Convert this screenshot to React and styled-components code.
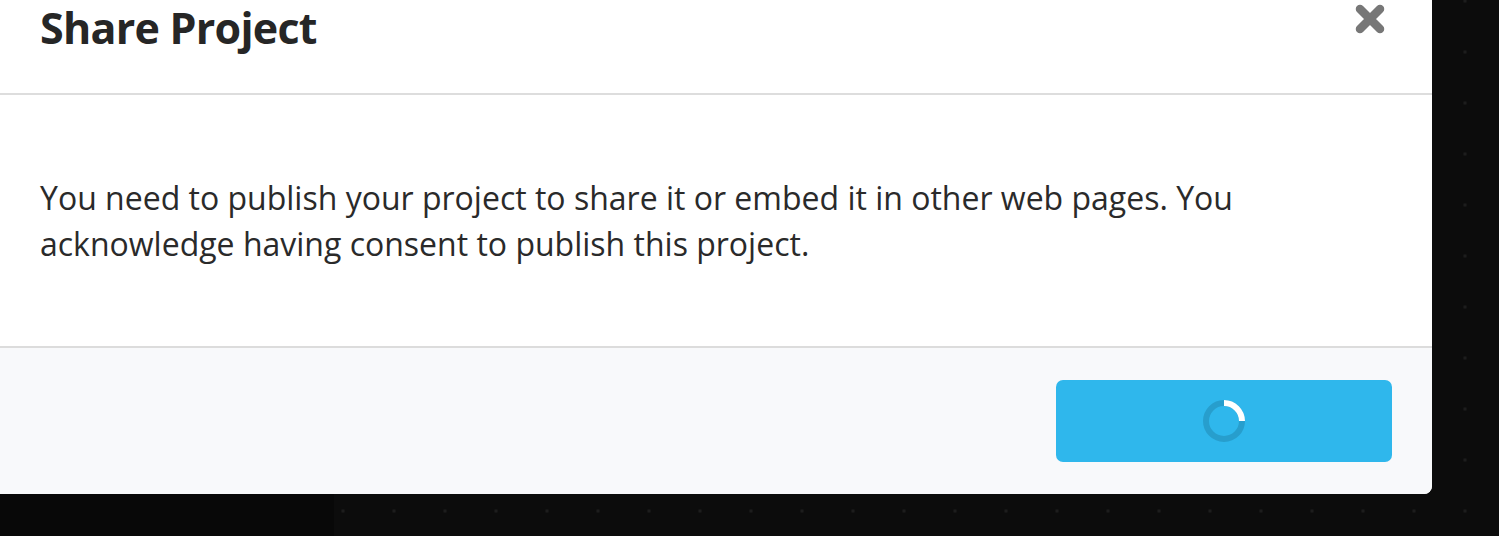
import React from 'react';
import styled, { createGlobalStyle } from 'styled-components';

const GlobalStyle = createGlobalStyle`
  html, body {
    margin: 0;
    padding: 0;
    background: #080808;
    overflow: hidden;
  }
  * {
    box-sizing: border-box;
  }
`;

const Screen = styled.div`
  position: relative;
  display: flex;
  width: 1499px;
  height: 536px;
  overflow: hidden;
  font-family: 'Open Sans', 'Noto Sans', sans-serif;
`;

const Sidebar = styled.div`
  width: 334px;
  flex-shrink: 0;
  background: #080808;
`;

const Canvas = styled.div`
  flex: 1;
  background-color: #0c0c0c;
  background-image: radial-gradient(circle, #1d1d1d 1.6px, transparent 2px);
  background-size: 51px 51px;
  background-position: -16.5px -24.5px;
`;

const Modal = styled.div`
  position: absolute;
  left: -20px;
  top: -20px;
  width: 1452px;
  display: flex;
  flex-direction: column;
  background: #fff;
  border-radius: 8px;
  overflow: hidden;
`;

const Header = styled.div`
  display: flex;
  justify-content: space-between;
  align-items: flex-start;
  height: 115px;
  padding: 18px 47px 0 60px;
  border-bottom: 2px solid #dddddd;
`;

const Title = styled.h2`
  margin: 0;
  font-size: 43px;
  font-weight: 700;
  letter-spacing: -0.75px;
  line-height: normal;
  color: #262626;
`;

const CloseButton = styled.button`
  display: flex;
  align-items: center;
  justify-content: center;
  margin-top: 6px;
  width: 30px;
  height: 30px;
  padding: 0;
  border: 0;
  background: transparent;
  cursor: pointer;
`;

const Body = styled.div`
  padding: 80px 40px 79px 60px;
  border-bottom: 2px solid #dcdcdc;
`;

const Message = styled.p`
  margin: 0;
  font-size: 32px;
  line-height: 46px;
  color: #2a2a2a;
`;

const Footer = styled.div`
  display: flex;
  justify-content: flex-end;
  padding: 32px 40px 32px;
  background: #f8f9fb;
`;

const PrimaryButton = styled.button`
  display: flex;
  align-items: center;
  justify-content: center;
  width: 336px;
  height: 82px;
  border: 0;
  border-radius: 7px;
  background: #2fb7ec;
  cursor: progress;
`;

const CloseIcon = () => (
  <svg width="30" height="30" viewBox="0 0 30 30">
    <path
      d="M5 5 L25 25 M25 5 L5 25"
      fill="none"
      stroke="#777777"
      strokeWidth="8.5"
      strokeLinecap="round"
    />
  </svg>
);

const Spinner = () => (
  <svg width="42" height="42" viewBox="0 0 42 42">
    <circle cx="21" cy="21" r="18" fill="none" stroke="#279ecd" strokeWidth="6" />
    <path d="M21 3 A18 18 0 0 1 39 21" fill="none" stroke="#ffffff" strokeWidth="6" />
  </svg>
);

const App = () => (
  <Screen>
    <GlobalStyle />
    <Sidebar />
    <Canvas />
    <Modal>
      <Header>
        <Title>Share Project</Title>
        <CloseButton aria-label="Close">
          <CloseIcon />
        </CloseButton>
      </Header>
      <Body>
        <Message>
          You need to publish your project to share it or embed it in other web pages. You
          acknowledge having consent to publish this project.
        </Message>
      </Body>
      <Footer>
        <PrimaryButton aria-label="Publishing">
          <Spinner />
        </PrimaryButton>
      </Footer>
    </Modal>
  </Screen>
);

export default App;
